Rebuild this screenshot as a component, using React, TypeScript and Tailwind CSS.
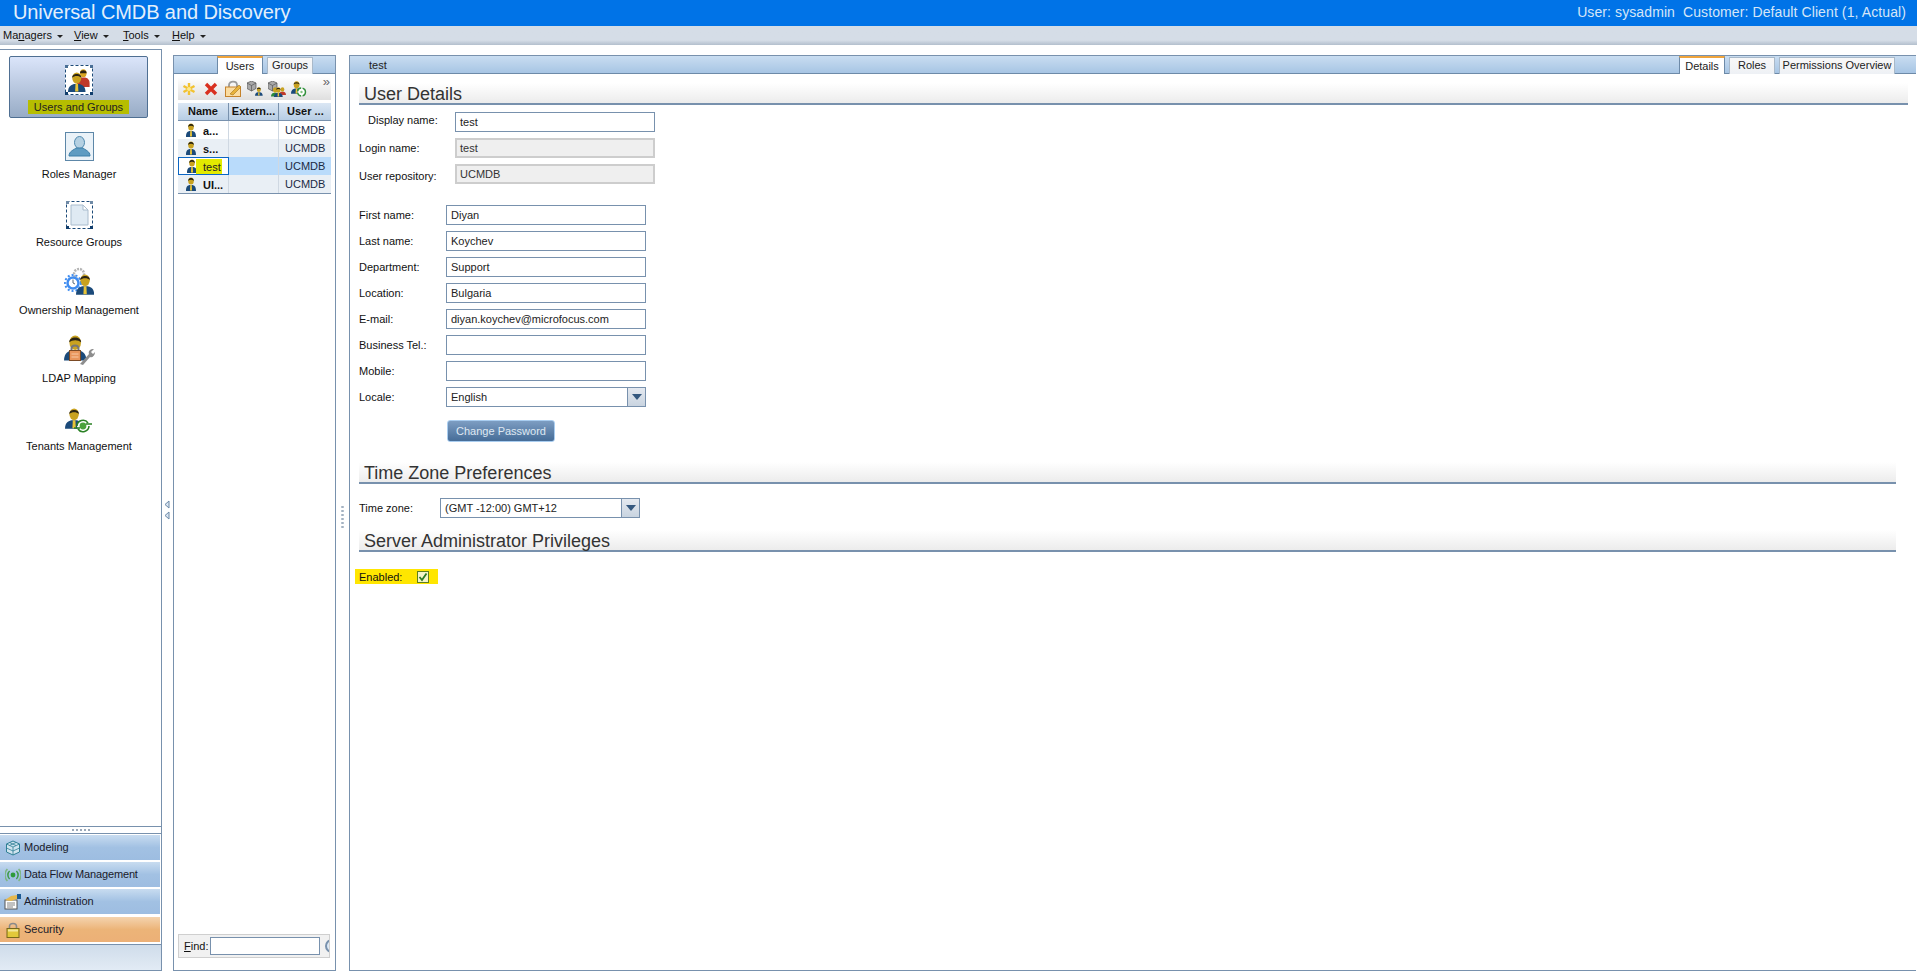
import React from "react";

const font = { fontFamily: '"Liberation Sans", Arial, sans-serif' };

function P({ x = 0, y = 0, s = 1 }: { x?: number; y?: number; s?: number }) {
  return (
    <g transform={`translate(${x} ${y}) scale(${s})`}>
      <path d="M0 16 C0 11 3 10 5 9.5 L9 9.5 C11 10 14 11 14 16 Z" fill="#1b4a7a" />
      <ellipse cx="7" cy="4.8" rx="3.6" ry="4.5" fill="#c9a21f" />
      <path d="M3.3 4.6 C3 0.5 11 0.5 10.7 4.6 C9 2.8 5 2.8 3.3 4.6 Z" fill="#2b2414" />
      <path d="M6 9.5 L8 9.5 L8.3 15.5 L5.7 15.5 Z" fill="#e8c437" />
    </g>
  );
}

const IconUsers = () => (
  <svg width="28" height="30" viewBox="0 0 28 30">
    <rect width="28" height="30" fill="#fff" />
    <g transform="translate(12 4) scale(0.9)">
      <path d="M0 16 C0 11 3 10 5 9.5 L9 9.5 C11 10 14 11 14 16 L14 20 L0 20 Z" fill="#c0392b" />
      <ellipse cx="7" cy="4.8" rx="3.6" ry="4.5" fill="#d9a521" />
      <path d="M3.3 4.6 C3 0.5 11 0.5 10.7 4.6 Z" fill="#2b2414" />
    </g>
    <P x={3} y={7} s={1.25} />
    <rect x="0.5" y="0.5" width="27" height="29" fill="none" stroke="#1c4a78" strokeDasharray="3 2" />
    <rect x="0" y="0" width="3" height="3" fill="#4a6f95" />
    <rect x="25" y="0" width="3" height="3" fill="#4a6f95" />
    <rect x="0" y="27" width="3" height="3" fill="#123e6c" />
    <rect x="25" y="27" width="3" height="3" fill="#123e6c" />
  </svg>
);
const IconRoles = () => (
  <svg width="29" height="29" viewBox="0 0 29 29">
    <rect x="0.5" y="0.5" width="28" height="28" fill="#eaf2f8" stroke="#5d87a8" />
    <ellipse cx="14.5" cy="10.5" rx="5" ry="6" fill="#b4d0e2" stroke="#4d88ae" />
    <path d="M4 24 C4 19 9 18 11 16 L18 16 C20 18 25 19 25 24 Z" fill="#5f9cc2" stroke="#3d7fa8" />
  </svg>
);
const IconResource = () => (
  <svg width="27" height="28" viewBox="0 0 27 28">
    <rect x="0.5" y="0.5" width="26" height="27" fill="#fff" stroke="#1c4a78" strokeDasharray="3 2" />
    <path d="M5 4 L17 4 L22 9 L22 24 L5 24 Z" fill="#dfeaf3" stroke="#a9bccd" />
    <path d="M17 4 L17 9 L22 9 Z" fill="#fff" stroke="#a9bccd" />
    <rect x="0" y="0" width="3" height="3" fill="#6f8aa6" />
    <rect x="24" y="0" width="3" height="3" fill="#6f8aa6" />
    <rect x="0" y="25" width="3" height="3" fill="#123e6c" />
    <rect x="24" y="25" width="3" height="3" fill="#123e6c" />
  </svg>
);
const IconOwner = () => (
  <svg width="30" height="30" viewBox="0 0 30 30">
    <circle cx="15" cy="7" r="5" fill="none" stroke="#b5b5b5" strokeWidth="2.5" strokeDasharray="2 1" />
    <circle cx="9" cy="16" r="5.5" fill="#fff" stroke="#3f8cf0" strokeWidth="2.5" />
    <circle cx="9" cy="16" r="8" fill="none" stroke="#3f8cf0" strokeWidth="2" strokeDasharray="2 2" />
    <path d="M9 12.5 V16 L11 17" fill="none" stroke="#345" strokeWidth="0.8" />
    <P x={12} y={7} s={1.3} />
  </svg>
);
const IconLdap = () => (
  <svg width="31" height="31" viewBox="0 0 31 31">
    <P x={0} y={1} s={1.6} />
    <path d="M7.5 17 L7.5 14.5 C7.5 10.5 14.5 10.5 14.5 14.5 L14.5 17" fill="none" stroke="#777" strokeWidth="2" />
    <rect x="5.5" y="16.5" width="11" height="10" fill="#e8955c" stroke="#7a4a25" />
    <path d="M7.5 20 H14.5 M7.5 23 H14.5" stroke="#f8c9a5" />
    <path d="M16 30 L25 20 C24 17 26 15 30 15 L27 18 L29 20 L31 18 C31 22 28 24 26 23 L19 31 Z" fill="#8d8d8d" />
  </svg>
);
const IconTenant = () => (
  <svg width="28" height="25" viewBox="0 0 28 25">
    <P x={0} y={0} s={1.3} />
    <circle cx="18" cy="18" r="6" fill="#fff" />
    <circle cx="18" cy="18" r="3.4" fill="#4aa23c" />
    <path d="M12 18 A6 6 0 0 1 23 15 M24 18 A6 6 0 0 1 13 21" fill="none" stroke="#2a8125" strokeWidth="1.6" />
    <path d="M21 16 H27 M9 20 H15" stroke="#2a8125" strokeWidth="1.4" />
  </svg>
);

const IconCube = () => (
  <svg width="16" height="16" viewBox="0 0 16 16">
    <path d="M8 1 L14.5 4 L14.5 12 L8 15 L1.5 12 L1.5 4 Z" fill="#cfe3ee" stroke="#2f7f95" />
    <path d="M1.5 4 L8 7 L14.5 4 M8 7 V15 M1.5 8 L8 11 L14.5 8 M4.5 2.5 L11 5.5 M11 2.5 L4.5 5.5" fill="none" stroke="#2f7f95" strokeWidth="0.8" />
  </svg>
);
const IconWaves = () => (
  <svg width="16" height="16" viewBox="0 0 16 16">
    <circle cx="8" cy="8" r="2.4" fill="#2e9b3c" />
    <path d="M4.6 4 A5.5 5.5 0 0 0 4.6 12 M11.4 4 A5.5 5.5 0 0 1 11.4 12" fill="none" stroke="#3f9a48" strokeWidth="1.5" />
    <path d="M2.4 2 A8.5 8.5 0 0 0 2.4 14 M13.6 2 A8.5 8.5 0 0 1 13.6 14" fill="none" stroke="#7fb684" strokeWidth="1.6" />
  </svg>
);
const IconAdmin = () => (
  <svg width="17" height="16" viewBox="0 0 17 16">
    <rect x="1" y="6" width="12" height="9" fill="#fff" stroke="#555" />
    <path d="M3 9 H11 M3 11 H11 M3 13 H9" stroke="#666" strokeWidth="0.8" />
    <path d="M1 6 L7 2 L13 1 L13 5 L7 7 Z" fill="#e6b84c" />
    <rect x="13" y="0" width="4" height="5" fill="#1c5a92" />
  </svg>
);
const IconLock = () => (
  <svg width="14" height="16" viewBox="0 0 14 16">
    <path d="M3.5 7 V4.5 C3.5 0.5 10.5 0.5 10.5 4.5 V7" fill="none" stroke="#8a8a8a" strokeWidth="1.6" />
    <rect x="1" y="6.5" width="12" height="9" fill="#e2c93a" stroke="#77681a" />
    <rect x="2" y="7.5" width="10" height="2" fill="#f3e89a" />
  </svg>
);

const Star = () => (
  <svg width="14" height="14" viewBox="0 0 14 14">
    <path d="M7 1 V13 M1.5 4 L12.5 10 M12.5 4 L1.5 10" stroke="#f2c230" strokeWidth="2.4" />
    <circle cx="7" cy="7" r="2" fill="#ffe98a" />
  </svg>
);
const RedX = () => (
  <svg width="14" height="14" viewBox="0 0 14 14">
    <path d="M2 2 L12 12 M12 2 L2 12" stroke="#d9301f" strokeWidth="3.4" />
  </svg>
);
const LockNote = () => (
  <svg width="17" height="17" viewBox="0 0 17 17">
    <path d="M4 8 V5 C4 0.5 12 0.5 12 5 V8" fill="none" stroke="#9b9b9b" strokeWidth="1.8" />
    <rect x="0.5" y="7" width="15" height="9.5" fill="#fbdca0" stroke="#c5822b" />
    <path d="M5 14 L14 5 L16 7 L8 15 Z" fill="#e8b23a" stroke="#a3741c" strokeWidth="0.6" />
  </svg>
);
const CubeSm = ({ x, y }: { x: number; y: number }) => (
  <g transform={`translate(${x} ${y})`}>
    <path d="M4.5 0 L9 2 L9 7.5 L4.5 10 L0 7.5 L0 2 Z" fill="#a8a8a8" stroke="#555" strokeWidth="0.7" />
    <path d="M0 2 L4.5 4.5 L9 2 M4.5 4.5 V10" fill="none" stroke="#555" strokeWidth="0.7" />
  </g>
);
const CubePerson = () => (
  <svg width="16" height="15" viewBox="0 0 16 15">
    <CubeSm x={0} y={0} />
    <P x={8} y={6} s={0.55} />
  </svg>
);
const CubePeople = () => (
  <svg width="18" height="16" viewBox="0 0 18 16">
    <CubeSm x={0} y={0} />
    <g transform="translate(3 6) scale(0.6)">
      <path d="M0 16 C0 11 3 10 5 9.5 L9 9.5 C11 10 14 11 14 16 Z" fill="#2a8a3c" />
      <ellipse cx="7" cy="4.8" rx="3.6" ry="4.5" fill="#c9a21f" />
    </g>
    <g transform="translate(11 6) scale(0.5)">
      <path d="M0 16 C0 11 3 10 5 9.5 L9 9.5 C11 10 14 11 14 16 Z" fill="#c0392b" />
      <ellipse cx="7" cy="4.8" rx="3.6" ry="4.5" fill="#c9a21f" />
    </g>
    <P x={6} y={6} s={0.62} />
  </svg>
);
const PersonArrows = () => (
  <svg width="16" height="16" viewBox="0 0 16 16">
    <P x={0} y={0} s={0.8} />
    <circle cx="10.5" cy="11" r="4" fill="#fff" stroke="#2f8f3a" strokeWidth="1.4" strokeDasharray="5 1.5" />
    <circle cx="10.5" cy="11" r="1.2" fill="#7fc47f" />
  </svg>
);
const RowPerson = () => (
  <svg width="10" height="14" viewBox="0 0 10 14" className="shrink-0">
    <path d="M0 14 C0 9 2 8.5 3.5 8 L6.5 8 C8 8.5 10 9 10 14 Z" fill="#1b4a7a" />
    <ellipse cx="5" cy="4" rx="2.8" ry="3.6" fill="#c9a21f" />
    <path d="M2.2 4 C2 0 8 0 7.8 4 C6.5 2.3 3.5 2.3 2.2 4 Z" fill="#1d1a10" />
    <path d="M4.2 8 H5.8 L6 13.5 H4 Z" fill="#e8c437" />
  </svg>
);

function Mn({ c, rest }: { c: string; rest: string }) {
  return (
    <>
      <span className="underline underline-offset-1">{c}</span>
      {rest}
    </>
  );
}

function Menu({ children, w }: { children: React.ReactNode; w: string }) {
  return (
    <div className={`flex items-center ${w}`}>
      <span>{children}</span>
      <span className="ml-[5px] mt-[1px] border-x-[3px] border-t-[3px] border-x-transparent border-t-[#222]" />
    </div>
  );
}

function NavItem({ icon, label, h }: { icon: React.ReactNode; label: string; h: string }) {
  return (
    <div className={`flex flex-col items-center pl-[1px] ${h}`}>
      <div className="h-[36px] flex items-end justify-center w-full">{icon}</div>
      <div className="mt-[6px] text-[11px] leading-[14px] text-[#111]">{label}</div>
    </div>
  );
}

function Outlook({ icon, label, orange, mb = "mb-[2px]", track = "" }: { icon: React.ReactNode; label: string; orange?: boolean; mb?: string; track?: string }) {
  return (
    <div
      className={`h-[25px] ${mb} mr-[1px] flex items-center text-[11px] text-[#1a1a2a] ${
        orange
          ? "bg-gradient-to-b from-[#f4d3ae] via-[#ecb478] via-50% to-[#ecb077]"
          : "bg-gradient-to-b from-[#c8dcf0] via-[#a2c1e3] via-50% to-[#9dbde1]"
      }`}
    >
      <div className="w-[24px] flex justify-center pl-[1px]">{icon}</div>
      <span className={track}>{label}</span>
    </div>
  );
}

function Tab({ label, active, w }: { label: string; active?: boolean; w: string }) {
  return active ? (
    <div className={`${w} h-[18px] -mb-[1px] bg-white border-x border-[#6d8aa8] border-t-2 border-t-[#f0a43c] flex items-center justify-center text-[11px] text-[#222] relative`}>
      {label}
    </div>
  ) : (
    <div className={`${w} h-[17px] mt-[1px] pb-[1px] bg-gradient-to-b from-[#f8f8f8] to-[#eef1f5] border-x border-t border-[#a9b9c9] flex items-center justify-center text-[11px] text-[#222]`}>
      {label}
    </div>
  );
}

const bandCls = "h-[18px] flex bg-gradient-to-b from-[#c9ddf1] to-[#a7c5e4] border-b border-[#6d8aa8]";

function TableRow({ name, tone, sel }: { name: string; tone: string; sel?: boolean }) {
  return (
    <div className={`h-[18px] flex text-[11px] ${tone}`}>
      <div className={`w-[51px] flex items-center pl-[8px] gap-[7px] ${sel ? "border-[1.5px] border-[#0b66c4] bg-white pl-[6.5px]" : "border-r border-[#cfd8e2]"}`}>
        <RowPerson />
        {sel ? (
          <span className="bg-[#e3ea00] pl-[7px] pr-[1px] -ml-[8px] h-[15px] leading-[16px] text-[#222]">test</span>
        ) : (
          <span className="font-bold text-[#111] leading-[14px] pt-[1px]">{name}</span>
        )}
      </div>
      <div className="w-[50px] border-r border-[#cfd8e2]" />
      <div className="flex-1 pl-[6px] pt-[1px] flex items-center text-[#1a2a44]">UCMDB</div>
    </div>
  );
}

function Field({ label, value, labelW = "w-[96px]", inputW = "w-[200px]", disabled, indent, labelY = "mt-0" }: { label: string; value?: string; labelW?: string; inputW?: string; disabled?: boolean; indent?: boolean; labelY?: string }) {
  return (
    <div className="flex items-center h-[20px] mb-[6px]">
      <div className={`${labelW} ${indent ? "pl-[9px]" : ""} text-[11px] leading-[13px] ${labelY} text-[#111]`}>{label}</div>
      <div
        className={`${inputW} h-[20px] flex items-center text-[11px] pt-[1px] ${
          disabled ? "px-[3px] bg-[#efefef] border-2 border-[#cdcdcd] text-[#333]" : "px-[4px] bg-white border-[1.5px] border-[#7891ad] text-[#222]"
        }`}
      >
        {value}
      </div>
    </div>
  );
}

function Combo({ label, value, labelW }: { label: string; value: string; labelW: string }) {
  return (
    <div className="flex items-center h-[20px]">
      <div className={`${labelW} text-[11px] leading-[13px] text-[#111]`}>{label}</div>
      <div className="w-[200px] h-[20px] flex bg-white border-[1.5px] border-[#7891ad] text-[11px] text-[#222]">
        <div className="flex-1 px-[4px] flex items-center pt-[1px]">{value}</div>
        <div className="w-[18px] border-l border-[#7891ad] bg-gradient-to-b from-[#e4e9f0] to-[#c9d4e0] flex items-center justify-center">
          <span className="border-x-[5px] border-t-[6px] border-x-transparent border-t-[#34587f]" />
        </div>
      </div>
    </div>
  );
}

function SectionHead({ label, w, mb, mt }: { label: string; w: string; mb: string; mt?: string }) {
  return (
    <div className={`${w} ${mb} ${mt ?? ""} h-[22px] pl-[5px] bg-gradient-to-b from-white to-[#ececec] border-b-2 border-[#7891ad] text-[18px] leading-[22px] text-[#333]`}>
      {label}
    </div>
  );
}

export default function App() {
  return (
    <div className="w-[1917px] h-[972px] flex flex-col bg-white overflow-hidden" style={font}>
      {/* Title bar */}
      <div className="h-[26px] shrink-0 bg-[#0073e7] flex items-center justify-between pl-[13px] pr-[11px]">
        <div className="text-[20px] leading-[24px] tracking-[-0.1px] -mt-[2px] text-[#e3effb]">Universal CMDB and Discovery</div>
        <div className="text-[14px] tracking-[0.1px] -mt-[1px] text-[#d5e6f8] whitespace-pre">User: sysadmin  Customer: Default Client (1, Actual)</div>
      </div>
      {/* Menu bar */}
      <div className="h-[19px] shrink-0 bg-gradient-to-b from-[#d5dde7] from-75% to-[#b3bfcd] flex items-center pl-[3px] text-[11px] text-[#111]">
        <Menu w="w-[71px]">Ma<span className="underline underline-offset-1">n</span>agers</Menu>
        <Menu w="w-[49px]"><Mn c="V" rest="iew" /></Menu>
        <Menu w="w-[49px]"><Mn c="T" rest="ools" /></Menu>
        <Menu w="w-[40px]"><Mn c="H" rest="elp" /></Menu>
      </div>
      {/* Body */}
      <div className="flex-1 min-h-0 flex pb-[1px]">
        {/* Left navigator */}
        <div className="w-[162px] shrink-0 mt-[4px] border-t border-r border-[#7891ad] flex flex-col">
          <div className="flex-1 pt-[6px] pl-[9px] pr-[13px]">
            <div className="h-[62px] rounded-[2px] border border-[#4f6f92] bg-gradient-to-b from-[#dbe5fa] to-[#98acc6] flex flex-col items-center pt-[8px] mb-[7px]">
              <IconUsers />
              <div className="mt-[5px] w-[101px] h-[14px] bg-[#b6bd00] text-[11px] leading-[14px] text-center text-[#222]">Users and Groups</div>
            </div>
            <NavItem icon={<IconRoles />} label="Roles Manager" h="h-[68px]" />
            <NavItem icon={<IconResource />} label="Resource Groups" h="h-[68px]" />
            <NavItem icon={<IconOwner />} label="Ownership Management" h="h-[68px]" />
            <NavItem icon={<IconLdap />} label="LDAP Mapping" h="h-[68px]" />
            <NavItem icon={<IconTenant />} label="Tenants Management" h="h-[68px]" />
          </div>
          <div className="h-[7px] border-t border-[#7891ad] flex items-center justify-center gap-[2px]">
            {[0, 1, 2, 3, 4].map((i) => (
              <span key={i} className="w-[2px] h-[2px] bg-[#9aa8b8]" />
            ))}
          </div>
          <div className="border-t border-[#7891ad] pt-[1px]">
            <Outlook icon={<IconCube />} label="Modeling" />
            <Outlook icon={<IconWaves />} label="Data Flow Management" track="tracking-[-0.15px]" />
            <Outlook icon={<IconAdmin />} label="Administration" mb="mb-[3px]" />
            <Outlook icon={<IconLock />} label="Security" orange />
          </div>
          <div className="h-[27px] border-t border-[#7891ad] border-b bg-gradient-to-b from-[#cfdcea] to-[#e2ebf5]" />
        </div>
        {/* Collapse splitter */}
        <div className="w-[11px] shrink-0 flex flex-col items-center justify-center gap-[2px] pt-[4px] pr-[1px]">
          {[0, 1].map((i) => (
            <svg key={i} width="6" height="9" viewBox="0 0 6 9">
              <path d="M5 1 L1 4.5 L5 8 Z" fill="#dbe6f2" stroke="#6d8aa8" />
            </svg>
          ))}
        </div>
        {/* Users panel */}
        <div className="w-[163px] shrink-0 mt-[10px] border border-[#7891ad] flex flex-col">
          <div className={bandCls}>
            <div className="w-[43px]" />
            <Tab label="Users" active w="w-[46px]" />
            <div className="w-[4px]" />
            <Tab label="Groups" w="w-[46px]" />
          </div>
          <div className="px-[4px] pt-[3px] flex-1 flex flex-col">
            <div className="h-[23px] bg-gradient-to-b from-white to-[#dfdfdf] flex items-center relative">
              <div className="w-[22px] flex justify-center"><Star /></div>
              <div className="w-[22px] flex justify-center"><RedX /></div>
              <div className="w-[22px] flex justify-center"><LockNote /></div>
              <div className="w-[22px] flex justify-center"><CubePerson /></div>
              <div className="w-[22px] flex justify-center"><CubePeople /></div>
              <div className="w-[22px] flex justify-center"><PersonArrows /></div>
              <span className="absolute right-[1px] top-[-2px] text-[13px] leading-[14px] text-[#666]">»</span>
            </div>
            <div className="mt-[3px] border-b border-[#7891ad]">
              <div className="h-[18px] flex border-b border-[#7891ad] bg-gradient-to-b from-[#dbe7f4] to-[#b7cde4] text-[11px] font-bold text-[#111]">
                <div className="w-[51px] border-r border-[#7891ad] flex items-center justify-center">Name</div>
                <div className="w-[50px] border-r border-[#7891ad] flex items-center justify-center">Extern...</div>
                <div className="flex-1 flex items-center pl-[8px]">User ...</div>
              </div>
              <TableRow name="a..." tone="bg-white" />
              <TableRow name="s..." tone="bg-[#e9eff5]" />
              <TableRow name="test" tone="bg-[#b9dbfb]" sel />
              <TableRow name="UI..." tone="bg-[#e9eff5]" />
            </div>
            <div className="flex-1" />
            <div className="h-[24px] mb-[12px] w-[152px] border border-[#cfcfcf] bg-[#f1f1f1] flex items-center overflow-hidden text-[11px] text-[#111]">
              <span className="ml-[5px] mr-[2px]"><span className="underline underline-offset-1">F</span>ind:</span>
              <div className="w-[110px] h-[18px] bg-white border border-[#7891ad] shrink-0" />
              <div className="ml-[5px] w-[14px] h-[14px] shrink-0 rounded-full border-2 border-[#7891ad] bg-[#dce8f4]" />
            </div>
          </div>
        </div>
        {/* Sash */}
        <div className="w-[13px] shrink-0 flex flex-col items-center justify-center gap-[2px] pt-[17px]">
          {[0, 1, 2, 3, 4, 5].map((i) => (
            <span key={i} className="w-[3px] h-[2px] rounded-full bg-[#a3b2c2]" />
          ))}
        </div>
        {/* Details panel */}
        <div className="w-[1567px] shrink-0 mt-[10px] mr-[2px] border border-[#7891ad] border-r-0 flex flex-col">
          <div className={`${bandCls} justify-between text-[11px] text-[#222]`}>
            <div className="pl-[19px] flex items-center pt-[2px]">test</div>
            <div className="flex pr-[21px]">
              <Tab label="Details" active w="w-[46px]" />
              <div className="w-[4px]" />
              <Tab label="Roles" w="w-[46px]" />
              <div className="w-[4px]" />
              <Tab label="Permissions Overview" w="w-[116px]" />
            </div>
          </div>
          <div className="pl-[9px] pt-[9px]">
            <SectionHead label="User Details" w="w-[1549px]" mb="mb-[7px]" />
            <Field label="Display name:" value="test" labelW="w-[96px]" indent labelY="-mt-[4px]" />
            <Field label="Login name:" value="test" labelW="w-[96px]" disabled />
            <Field label="User repository:" value="UCMDB" labelW="w-[96px]" disabled labelY="mt-[5px]" />
            <div className="h-[15px]" />
            <Field label="First name:" value="Diyan" labelW="w-[87px]" />
            <Field label="Last name:" value="Koychev" labelW="w-[87px]" />
            <Field label="Department:" value="Support" labelW="w-[87px]" />
            <Field label="Location:" value="Bulgaria" labelW="w-[87px]" />
            <Field label="E-mail:" value="diyan.koychev@microfocus.com" labelW="w-[87px]" />
            <Field label="Business Tel.:" labelW="w-[87px]" />
            <Field label="Mobile:" labelW="w-[87px]" />
            <Combo label="Locale:" value="English" labelW="w-[87px]" />
            <div className="ml-[88px] mt-[13px] w-[108px] h-[22px] rounded-[3px] border border-[#a9cdf0] bg-gradient-to-b from-[#7d9dc2] to-[#466d98] text-[11px] text-[#dfe8f2] flex items-center justify-center">Change Password</div>
            <SectionHead label="Time Zone Preferences" w="w-[1537px]" mb="mb-[14px]" mt="mt-[20px]" />
            <Combo label="Time zone:" value="(GMT -12:00) GMT+12" labelW="w-[81px]" />
            <SectionHead label="Server Administrator Privileges" w="w-[1537px]" mb="mb-[17px]" mt="mt-[12px]" />
            <div className="-ml-[4px] w-[83px] h-[15px] bg-[#ffe600] flex items-center pl-[4px] text-[11px] text-[#111]">
              <span className="w-[58px] pt-[1px]">Enabled:</span>
              <svg width="12" height="12" viewBox="0 0 12 12">
                <rect x="0.5" y="0.5" width="11" height="11" fill="#f4f4c8" stroke="#5d7f1e" />
                <path d="M2.5 6 L5 9 L9.5 2.5" fill="none" stroke="#2c7a24" strokeWidth="1.8" />
              </svg>
            </div>
          </div>
        </div>
      </div>
    </div>
  );
}
